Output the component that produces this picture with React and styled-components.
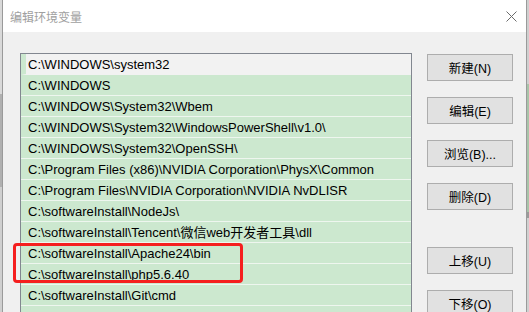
import React from 'react';
import styled, { createGlobalStyle } from 'styled-components';

const GlobalStyle = createGlobalStyle`
  html, body {
    margin: 0;
    padding: 0;
    overflow: hidden;
    background: #c4c4c4;
  }
`;

const paths = [
  'C:\\WINDOWS\\system32',
  'C:\\WINDOWS',
  'C:\\WINDOWS\\System32\\Wbem',
  'C:\\WINDOWS\\System32\\WindowsPowerShell\\v1.0\\',
  'C:\\WINDOWS\\System32\\OpenSSH\\',
  'C:\\Program Files (x86)\\NVIDIA Corporation\\PhysX\\Common',
  'C:\\Program Files\\NVIDIA Corporation\\NVIDIA NvDLISR',
  'C:\\softwareInstall\\NodeJs\\',
  'C:\\softwareInstall\\Tencent\\微信web开发者工具\\dll',
  'C:\\softwareInstall\\Apache24\\bin',
  'C:\\softwareInstall\\php5.6.40',
  'C:\\softwareInstall\\Git\\cmd',
  '',
];

const buttons = [
  { label: '新建(N)' },
  { label: '编辑(E)' },
  { label: '浏览(B)...' },
  { label: '删除(D)' },
  { label: '上移(U)', spaced: true },
  { label: '下移(O)' },
];

const App = () => {
  return (
    <Desktop>
      <GlobalStyle />
      <LeftEdge />
      <Window>
        <TitleBar>
          <Title>编辑环境变量</Title>
          <CloseIcon width="11" height="11" viewBox="0 0 11 11">
            <path d="M0.5 0.5 L10.5 10.5 M10.5 0.5 L0.5 10.5" stroke="#6b6b6b" strokeWidth="1" fill="none" />
          </CloseIcon>
        </TitleBar>
        <Body>
          <List>
            {paths.map((p, i) => (
              <Row key={i} $current={i === 0}>{p}</Row>
            ))}
          </List>
          <ButtonColumn>
            {buttons.map((b) => (
              <Button key={b.label} $spaced={b.spaced}>{b.label}</Button>
            ))}
          </ButtonColumn>
        </Body>
      </Window>
      <RightEdge />
      <Highlight />
    </Desktop>
  );
};

export default App;

const Desktop = styled.div`
  position: relative;
  display: flex;
  width: 529px;
  height: 312px;
  overflow: hidden;
  font-family: "Liberation Sans", "Noto Sans CJK SC", sans-serif;
`;

const LeftEdge = styled.div`
  width: 2px;
  flex-shrink: 0;
  background: linear-gradient(#d9d9d9 0 30%, #b0b0b0 30% 60%, #cfcfcf 60%);
`;

const RightEdge = styled.div`
  width: 2px;
  flex-shrink: 0;
  background: linear-gradient(#cfcfcf 0 27%, #a9c4a9 27% 68%, #9a9a9a 68% 70%, #d0d0d0 70%);
`;

const Window = styled.div`
  width: 525px;
  flex-shrink: 0;
  display: flex;
  flex-direction: column;
  border-left: 1px solid #9a9a9a;
  border-right: 1px solid #9a9a9a;
  box-sizing: border-box;
  background: #f0f0f0;
`;

const TitleBar = styled.div`
  height: 32px;
  flex-shrink: 0;
  display: flex;
  align-items: center;
  justify-content: space-between;
  padding: 0 9px 0 7px;
  background: #ffffff;
`;

const Title = styled.span`
  font-family: "Noto Sans CJK SC", sans-serif;
  font-size: 12px;
  color: #a0a0a0;
`;

const CloseIcon = styled.svg`
  display: block;
`;

const Body = styled.div`
  flex: 1;
  display: flex;
  align-items: flex-start;
  padding: 21px 0 0 17px;
  overflow: hidden;
`;

const List = styled.div`
  width: 392px;
  height: 400px;
  flex-shrink: 0;
  box-sizing: border-box;
  border: 1px solid #828790;
  background: #cce8cf;
`;

const Row = styled.div`
  height: 20px;
  line-height: 22px;
  padding-left: ${(p) => (p.$current ? '2px' : '7px')};
  border-bottom: 1px solid ${(p) => (p.$current ? '#f2f2f2' : '#eef6ef')};
  border-left: ${(p) => (p.$current ? '5px solid #cce8cf' : 'none')};
  background: ${(p) => (p.$current ? '#f2f2f2' : '#cce8cf')};
  font-size: 13px;
  color: #000;
  white-space: nowrap;
  overflow: hidden;
`;

const ButtonColumn = styled.div`
  display: flex;
  flex-direction: column;
  margin-left: 15px;
  padding-top: 1px;
`;

const Button = styled.button.attrs({ type: 'button' })`
  width: 86px;
  height: 27px;
  margin-top: ${(p) => (p.$spaced ? '21px' : '0')};
  margin-bottom: 16px;
  box-sizing: border-box;
  border: 1px solid #adadad;
  background: #e1e1e1;
  padding: 0;
  font-family: "Liberation Sans", "Noto Sans CJK SC", sans-serif;
  font-size: 12.5px;
  color: #000;
  text-align: center;
`;

const Highlight = styled.div`
  position: absolute;
  left: 13px;
  top: 243px;
  width: 230px;
  height: 40px;
  box-sizing: border-box;
  border: 3px solid #f51f1f;
  border-radius: 4px;
  pointer-events: none;
`;
